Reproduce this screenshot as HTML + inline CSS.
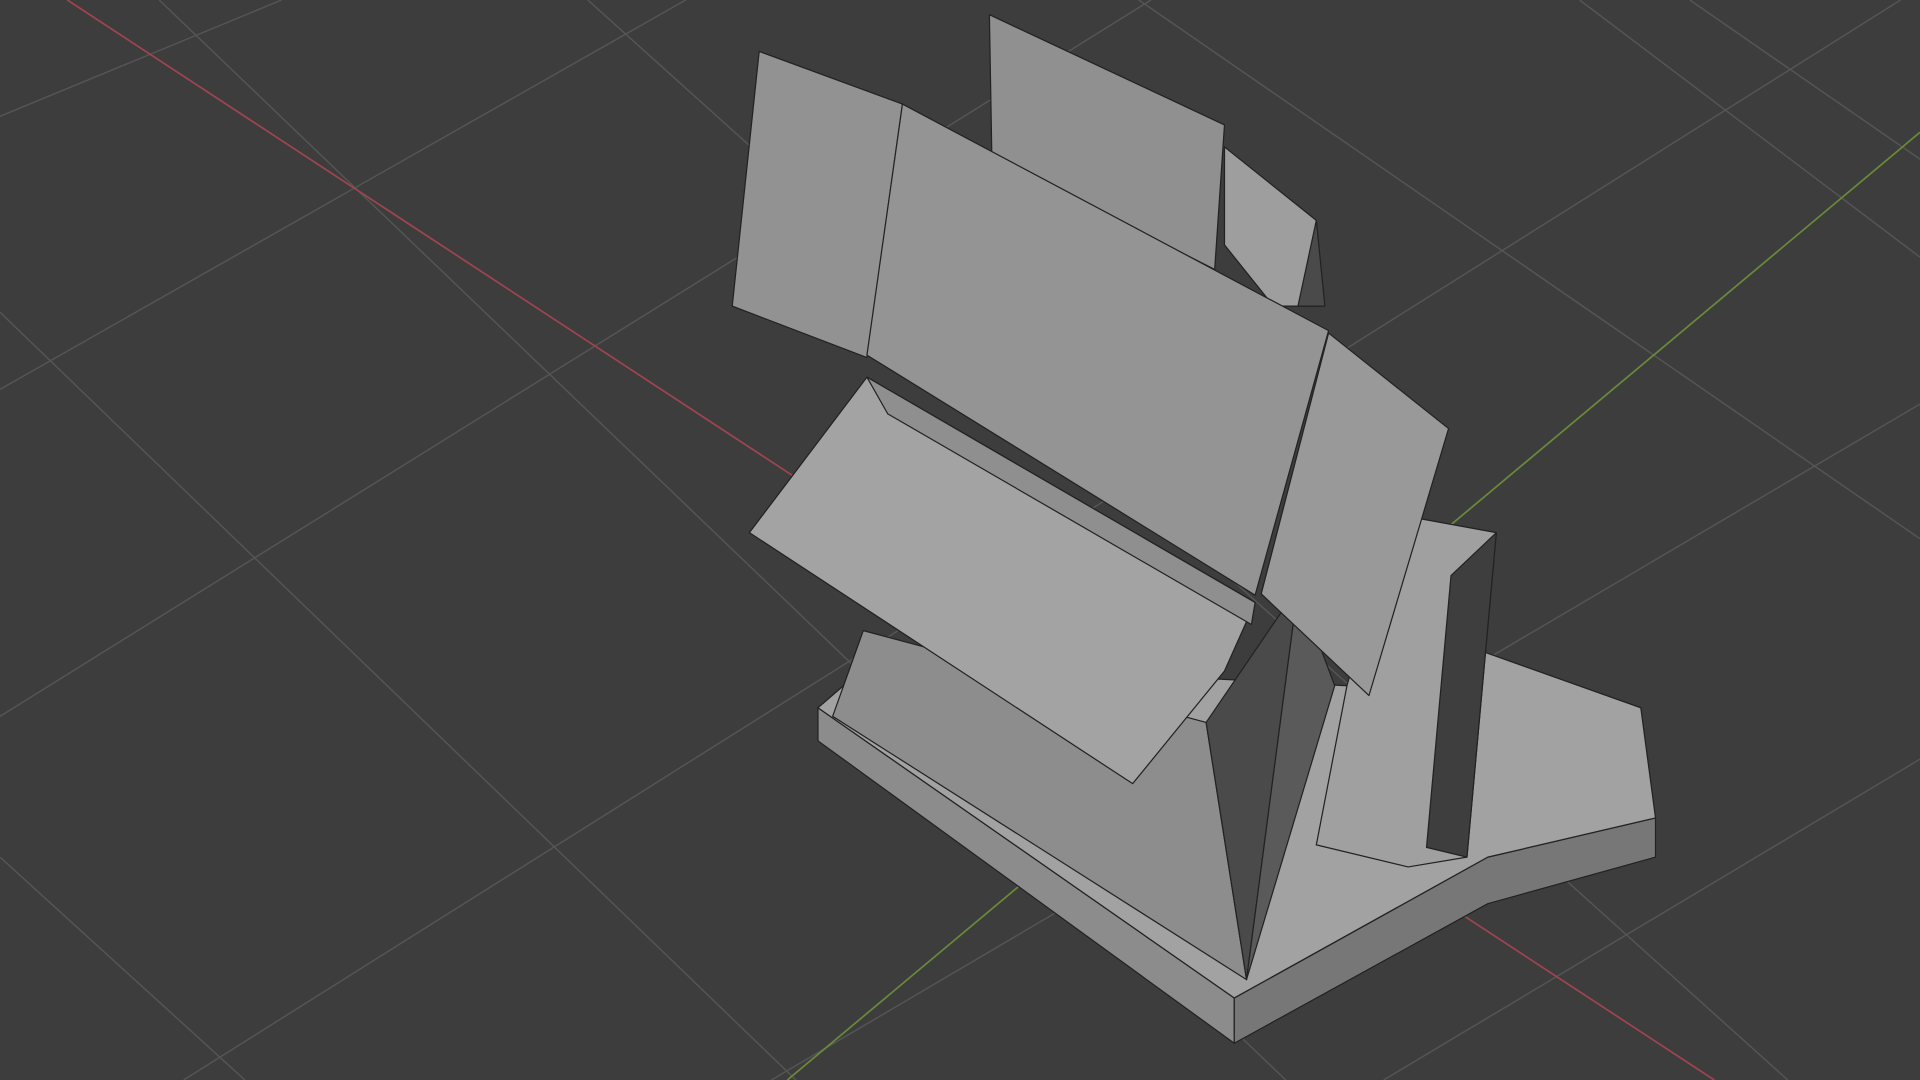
<!DOCTYPE html>
<html><head><meta charset="utf-8"><style>html,body{margin:0;padding:0;background:#3d3d3d;overflow:hidden}svg{display:block}</style></head>
<body>
<svg width="1920" height="1080" viewBox="0 0 1568 882" preserveAspectRatio="none" xmlns="http://www.w3.org/2000/svg">
<rect width="1568" height="882" fill="#3d3d3d"/>
<g stroke="#555" stroke-width="1.2" fill="none">
<line x1="0" y1="95" x2="230" y2="0"/>
<line x1="0" y1="318" x2="560" y2="0"/>
<line x1="0" y1="585" x2="940" y2="0"/>
<line x1="150" y1="882" x2="1568" y2="-10"/>
<line x1="630" y1="882" x2="1568" y2="330"/>
<line x1="1130" y1="882" x2="1568" y2="620"/>
<line x1="0" y1="255" x2="650" y2="882"/>
<line x1="0" y1="700" x2="200" y2="882"/>
<line x1="130" y1="0" x2="1050" y2="882"/>
<line x1="480" y1="0" x2="1460" y2="882"/>
<line x1="930" y1="0" x2="1568" y2="440"/>
<line x1="1290" y1="0" x2="1568" y2="210"/>
<line x1="1380" y1="0" x2="1568" y2="130"/>
</g>
<line x1="55" y1="0" x2="1400" y2="882" stroke="#a04450" stroke-width="1.4"/>
<line x1="1568" y1="108" x2="643" y2="882" stroke="#6a8a3a" stroke-width="1.4"/>
<g stroke="#222" stroke-width="1" stroke-linejoin="round">
<polygon points="668,578 668,605 1008,852 1008,815" fill="#8c8c8c"/>
<polygon points="1008,815 1215,700 1352,668 1352,700 1215,738 1008,852" fill="#777"/>
<polygon points="668,578 712,540 1100,560 1205,530 1340,578 1352,668 1215,700 1008,815" fill="#a2a2a2"/>
<polygon points="705,515 985,590 1018,800 680,585" fill="#8d8d8d"/>
<polygon points="985,590 1060,480 1018,800" fill="#4a4a4a"/>
<polygon points="1060,480 1090,560 1018,800" fill="#5a5a5a"/>
<polygon points="1140,420 1222,435 1198,700 1150,708 1075,690 1100,560" fill="#a0a0a0"/>
<polygon points="1222,435 1198,700 1165,692 1185,470" fill="#3e3e3e"/>
<polygon points="1000,120 1075,180 1080,250 1040,250 1000,200" fill="#9e9e9e"/>
<polygon points="1075,180 1082,250 1060,250" fill="#4a4a4a"/>
<polygon points="808,12 1000,102 992,220 810,128" fill="#909090"/>
<polygon points="620,42 737,85 708,292 598,250" fill="#929292"/>
<polygon points="737,85 1085,270 1025,486 708,290" fill="#949494"/>
<polygon points="1085,272 1183,350 1118,568 1030,485" fill="#999"/>
<polygon points="708,308 1025,492 1000,548 925,640 612,435" fill="#a3a3a3"/>
<polygon points="708,308 725,338 1022,510 1025,492" fill="#8f8f8f"/>
</g>
</svg>
</body></html>
